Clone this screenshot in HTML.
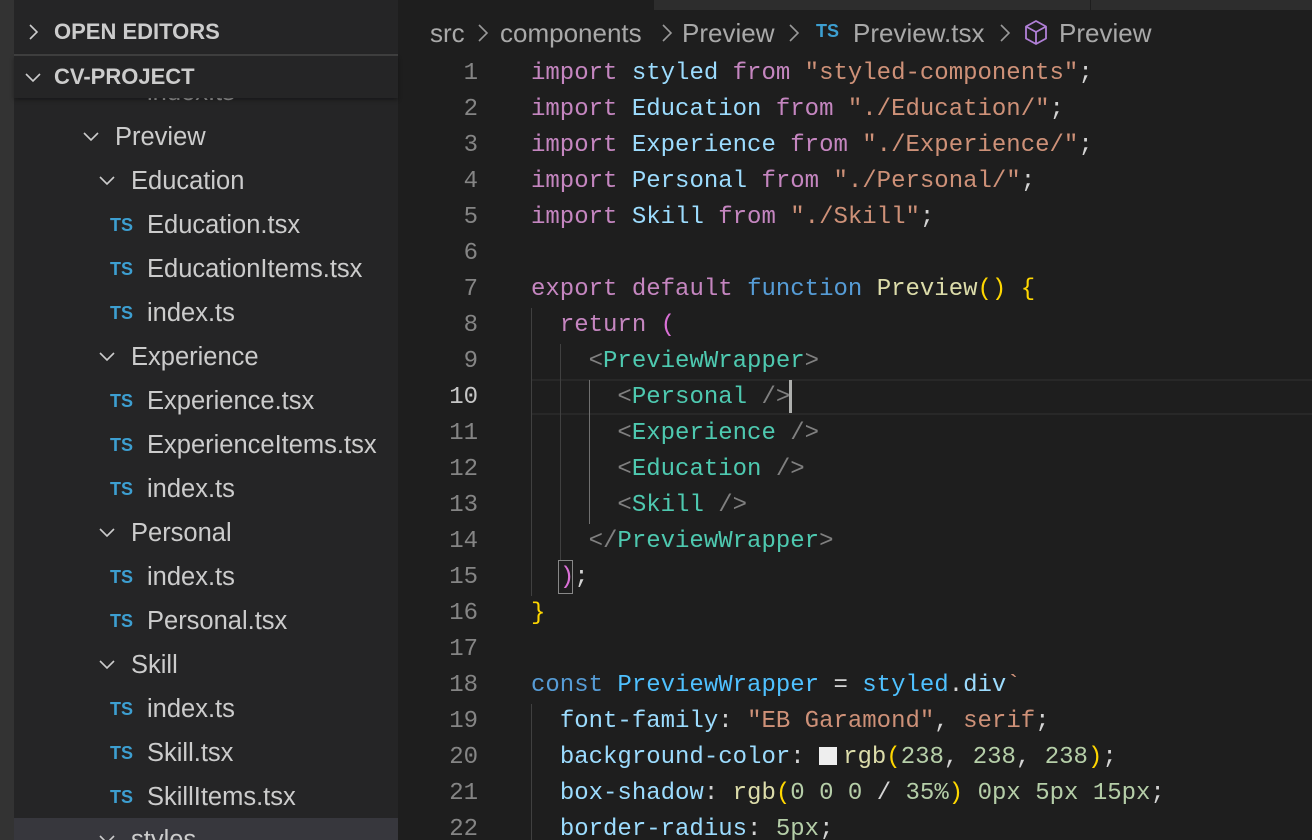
<!DOCTYPE html>
<html><head><meta charset="utf-8"><style>
*{margin:0;padding:0;box-sizing:border-box}
html,body{width:1312px;height:840px;overflow:hidden}
body{background:#1e1e1e;position:relative;font-family:"Liberation Sans",sans-serif}
.strip{position:absolute;left:0;top:0;width:14px;height:840px;background:#333333}
.side{position:absolute;left:14px;top:0;width:384px;height:840px;background:#252526;overflow:hidden}
.row{position:absolute;left:0;width:384px;height:44px;line-height:44px;font-size:25.5px;color:#cccccc;white-space:nowrap}
.ts{position:absolute;font-size:18px;font-weight:bold;color:#3d9fd1}
.chev{position:absolute;top:15px;width:18px;height:12px}
.hdr{position:absolute;left:14px;width:384px;height:44px;background:#252526;font-size:22px;font-weight:bold;color:#cccccc;line-height:44px}
.code{position:absolute;left:0;top:2px;font-family:"Liberation Mono",monospace;font-size:24px}
.ln{position:absolute;left:420px;width:58px;text-align:right;color:#858585;height:36px;line-height:36px}
.cl{position:absolute;left:531px;height:36px;line-height:36px;white-space:pre;color:#d4d4d4}
.k{color:#c586c0}.v{color:#9cdcfe}.s{color:#ce9178}.b{color:#569cd6}.f{color:#dcdcaa}.y{color:#ffd700}.t{color:#4ec9b0}.g{color:#808080}.n{color:#b5cea8}.c{color:#4fc1ff}.p{color:#da70d6}
.guide{position:absolute;width:1px;background:#404040}
.bc{position:absolute;top:16px;height:34px;line-height:34px;font-size:26px;color:#a9a9a9;white-space:nowrap}
.bch{position:absolute;top:23px}
</style></head><body>
<div class="strip"></div>
<div style="position:absolute;left:654px;top:0;width:658px;height:10px;background:#2d2d2d"></div>
<div style="position:absolute;left:1090px;top:0;width:1px;height:10px;background:#1e1e1e"></div>
<div class="side">
<div class="row" style="top:70px;color:#999"><span class="ts" style="left:96px;top:0">TS</span><span style="position:absolute;left:133px">index.ts</span></div>
<div class="row" style="top:115px"><svg class="chev" style="left:68px" viewBox="0 0 18 12"><path d="M2 3l7 7 7-7" stroke="#ccc" stroke-width="1.6" fill="none"/></svg><span style="position:absolute;left:101px">Preview</span></div>
<div class="row" style="top:159px"><svg class="chev" style="left:84px" viewBox="0 0 18 12"><path d="M2 3l7 7 7-7" stroke="#ccc" stroke-width="1.6" fill="none"/></svg><span style="position:absolute;left:117px">Education</span></div>
<div class="row" style="top:203px"><span class="ts" style="left:96px">TS</span><span style="position:absolute;left:133px">Education.tsx</span></div>
<div class="row" style="top:247px"><span class="ts" style="left:96px">TS</span><span style="position:absolute;left:133px">EducationItems.tsx</span></div>
<div class="row" style="top:291px"><span class="ts" style="left:96px">TS</span><span style="position:absolute;left:133px">index.ts</span></div>
<div class="row" style="top:335px"><svg class="chev" style="left:84px" viewBox="0 0 18 12"><path d="M2 3l7 7 7-7" stroke="#ccc" stroke-width="1.6" fill="none"/></svg><span style="position:absolute;left:117px">Experience</span></div>
<div class="row" style="top:379px"><span class="ts" style="left:96px">TS</span><span style="position:absolute;left:133px">Experience.tsx</span></div>
<div class="row" style="top:423px"><span class="ts" style="left:96px">TS</span><span style="position:absolute;left:133px">ExperienceItems.tsx</span></div>
<div class="row" style="top:467px"><span class="ts" style="left:96px">TS</span><span style="position:absolute;left:133px">index.ts</span></div>
<div class="row" style="top:511px"><svg class="chev" style="left:84px" viewBox="0 0 18 12"><path d="M2 3l7 7 7-7" stroke="#ccc" stroke-width="1.6" fill="none"/></svg><span style="position:absolute;left:117px">Personal</span></div>
<div class="row" style="top:555px"><span class="ts" style="left:96px">TS</span><span style="position:absolute;left:133px">index.ts</span></div>
<div class="row" style="top:599px"><span class="ts" style="left:96px">TS</span><span style="position:absolute;left:133px">Personal.tsx</span></div>
<div class="row" style="top:643px"><svg class="chev" style="left:84px" viewBox="0 0 18 12"><path d="M2 3l7 7 7-7" stroke="#ccc" stroke-width="1.6" fill="none"/></svg><span style="position:absolute;left:117px">Skill</span></div>
<div class="row" style="top:687px"><span class="ts" style="left:96px">TS</span><span style="position:absolute;left:133px">index.ts</span></div>
<div class="row" style="top:731px"><span class="ts" style="left:96px">TS</span><span style="position:absolute;left:133px">Skill.tsx</span></div>
<div class="row" style="top:775px"><span class="ts" style="left:96px">TS</span><span style="position:absolute;left:133px">SkillItems.tsx</span></div>
<div class="row" style="top:818px;background:#37373d"><svg class="chev" style="left:84px" viewBox="0 0 18 12"><path d="M2 3l7 7 7-7" stroke="#ccc" stroke-width="1.6" fill="none"/></svg><span style="position:absolute;left:117px">styles</span></div>
</div>
<div class="hdr" style="top:10px"><svg style="position:absolute;left:14px;top:13px" width="12" height="18" viewBox="0 0 12 18"><path d="M2 2l7 7-7 7" stroke="#ccc" stroke-width="1.6" fill="none"/></svg><span style="position:absolute;left:40px">OPEN EDITORS</span></div>
<div style="position:absolute;left:14px;top:54px;width:384px;height:2px;background:#404040"></div>
<div class="hdr" style="top:56px;height:42px;line-height:42px;box-shadow:0 2px 4px rgba(0,0,0,.35)"><svg style="position:absolute;left:10px;top:15px" width="18" height="12" viewBox="0 0 18 12"><path d="M2 3l7 7 7-7" stroke="#ccc" stroke-width="1.6" fill="none"/></svg><span style="position:absolute;left:40px">CV-PROJECT</span></div>

<div class="bc" style="left:430px">src</div>
<svg class="bch" style="left:477px" width="12" height="20" viewBox="0 0 12 20"><path d="M2 2l8 8-8 8" stroke="#999" stroke-width="1.6" fill="none"/></svg>
<div class="bc" style="left:500px">components</div>
<svg class="bch" style="left:661px" width="12" height="20" viewBox="0 0 12 20"><path d="M2 2l8 8-8 8" stroke="#999" stroke-width="1.6" fill="none"/></svg>
<div class="bc" style="left:682px">Preview</div>
<svg class="bch" style="left:788px" width="12" height="20" viewBox="0 0 12 20"><path d="M2 2l8 8-8 8" stroke="#999" stroke-width="1.6" fill="none"/></svg>
<div class="bc" style="left:816px;font-size:18px;font-weight:bold;color:#3d9fd1;top:14px">TS</div>
<div class="bc" style="left:853px">Preview.tsx</div>
<svg class="bch" style="left:999px" width="12" height="20" viewBox="0 0 12 20"><path d="M2 2l8 8-8 8" stroke="#999" stroke-width="1.6" fill="none"/></svg>
<svg style="position:absolute;left:1023px;top:19px" width="26" height="28" viewBox="0 0 26 28"><path d="M13 2l10 5.5v12L13 25 3 19.5v-12zM3 7.5l10 5.5 10-5.5M13 13v12" stroke="#b180d7" stroke-width="1.8" fill="none" stroke-linejoin="round"/></svg>
<div class="bc" style="left:1059px">Preview</div>

<div style="position:absolute;left:531px;top:379px;width:781px;height:36px;border-top:2px solid #282828;border-bottom:2px solid #282828"></div>
<div class="guide" style="left:531px;top:308px;height:288px"></div>
<div class="guide" style="left:560px;top:344px;height:216px"></div>
<div class="guide" style="left:589px;top:380px;height:144px;background:#707070"></div>
<div class="guide" style="left:531px;top:704px;height:140px"></div>
<div style="position:absolute;left:789px;top:380px;width:3px;height:33px;background:#aeafad"></div>
<div style="position:absolute;left:558px;top:560px;width:15px;height:34px;border:1px solid #888"></div>

<div class="code">
<div class="ln" style="top:54px">1</div><div class="cl" style="top:54px"><span class="k">import</span> <span class="v">styled</span> <span class="k">from</span> <span class="s">"styled-components"</span>;</div>
<div class="ln" style="top:90px">2</div><div class="cl" style="top:90px"><span class="k">import</span> <span class="v">Education</span> <span class="k">from</span> <span class="s">"./Education/"</span>;</div>
<div class="ln" style="top:126px">3</div><div class="cl" style="top:126px"><span class="k">import</span> <span class="v">Experience</span> <span class="k">from</span> <span class="s">"./Experience/"</span>;</div>
<div class="ln" style="top:162px">4</div><div class="cl" style="top:162px"><span class="k">import</span> <span class="v">Personal</span> <span class="k">from</span> <span class="s">"./Personal/"</span>;</div>
<div class="ln" style="top:198px">5</div><div class="cl" style="top:198px"><span class="k">import</span> <span class="v">Skill</span> <span class="k">from</span> <span class="s">"./Skill"</span>;</div>
<div class="ln" style="top:234px">6</div>
<div class="ln" style="top:270px">7</div><div class="cl" style="top:270px"><span class="k">export</span> <span class="k">default</span> <span class="b">function</span> <span class="f">Preview</span><span class="y">()</span> <span class="y">{</span></div>
<div class="ln" style="top:306px">8</div><div class="cl" style="top:306px">  <span class="k">return</span> <span class="p">(</span></div>
<div class="ln" style="top:342px">9</div><div class="cl" style="top:342px">    <span class="g">&lt;</span><span class="t">PreviewWrapper</span><span class="g">&gt;</span></div>
<div class="ln" style="top:378px;color:#c6c6c6">10</div><div class="cl" style="top:378px">      <span class="g">&lt;</span><span class="t">Personal</span> <span class="g">/&gt;</span></div>
<div class="ln" style="top:414px">11</div><div class="cl" style="top:414px">      <span class="g">&lt;</span><span class="t">Experience</span> <span class="g">/&gt;</span></div>
<div class="ln" style="top:450px">12</div><div class="cl" style="top:450px">      <span class="g">&lt;</span><span class="t">Education</span> <span class="g">/&gt;</span></div>
<div class="ln" style="top:486px">13</div><div class="cl" style="top:486px">      <span class="g">&lt;</span><span class="t">Skill</span> <span class="g">/&gt;</span></div>
<div class="ln" style="top:522px">14</div><div class="cl" style="top:522px">    <span class="g">&lt;/</span><span class="t">PreviewWrapper</span><span class="g">&gt;</span></div>
<div class="ln" style="top:558px">15</div><div class="cl" style="top:558px">  <span class="p">)</span>;</div>
<div class="ln" style="top:594px">16</div><div class="cl" style="top:594px"><span class="y">}</span></div>
<div class="ln" style="top:630px">17</div>
<div class="ln" style="top:666px">18</div><div class="cl" style="top:666px"><span class="b">const</span> <span class="c">PreviewWrapper</span> = <span class="c">styled</span>.<span class="v">div</span><span class="s">`</span></div>
<div class="ln" style="top:702px">19</div><div class="cl" style="top:702px">  <span class="v">font-family</span>: <span class="s">"EB Garamond"</span>, <span class="s">serif</span>;</div>
<div class="ln" style="top:738px">20</div><div class="cl" style="top:738px">  <span class="v">background-color</span>: <span style="display:inline-block;width:18px;height:18px;background:#eee;vertical-align:-2px;margin-right:6px"></span><span class="f">rgb</span><span class="y">(</span><span class="n">238</span>, <span class="n">238</span>, <span class="n">238</span><span class="y">)</span>;</div>
<div class="ln" style="top:774px">21</div><div class="cl" style="top:774px">  <span class="v">box-shadow</span>: <span class="f">rgb</span><span class="y">(</span><span class="n">0</span> <span class="n">0</span> <span class="n">0</span> / <span class="n">35%</span><span class="y">)</span> <span class="n">0px</span> <span class="n">5px</span> <span class="n">15px</span>;</div>
<div class="ln" style="top:810px">22</div><div class="cl" style="top:810px">  <span class="v">border-radius</span>: <span class="n">5px</span>;</div>
</div>
</body></html>
